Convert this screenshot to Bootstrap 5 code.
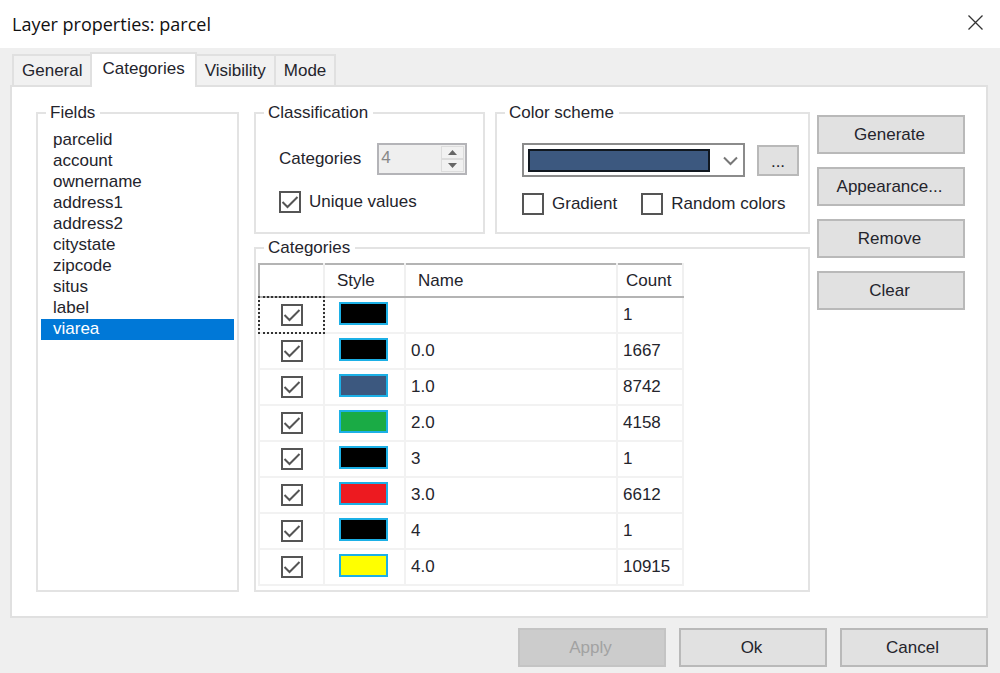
<!DOCTYPE html>
<html lang="en">
<head>
<meta charset="utf-8">
<meta name="viewport" content="width=device-width, initial-scale=1">
<title>Layer properties: parcel</title>
<link href="https://cdn.jsdelivr.net/npm/bootstrap@5.3.0/dist/css/bootstrap.min.css" rel="stylesheet">
<style>
  body { background: #efefef; color: #24242c; font-family: "Liberation Sans", Arial, sans-serif; font-size: 17px; line-height: 20px; }
  .title-bar { height: 48px; padding: 0 16px 0 12px; background: #fff; }
  .title-bar h1 { font: 18px/24px "Open Sans", sans-serif; color: #111; }
  .close-btn { line-height: 0; }

  .nav-tabs { padding: 4px 0 0 12px; border: 0; }
  .nav-tabs .nav-link { height: 31px; padding: 0 8px; margin: 0 -2px 0 0; border: 2px solid #e0e0e0; border-bottom: 0; border-radius: 0; color: inherit; background: #f1f1f1; }
  .nav-tabs .nav-link.active { height: 35px; padding: 0 10px 4px; margin-bottom: -2px; color: inherit; background: #fff; border-color: #e0e0e0; position: relative; z-index: 1; }
  .tab-panel { margin: 0 12px 0 10px; padding: 16px 21px 24px 24px; background: #fff; border: 2px solid #e0e0e0; }

  .group-box { border: 2px solid #e3e3e3; padding: 0 3px; }
  .group-box > legend { float: none; width: auto; margin: 0 0 0 5px; padding: 0 5px 0 4px; font-size: 17px; line-height: 20px; }
  .middle { gap: 4px; margin: 0 7px 0 15px; }
  .top-row { gap: 10px; }
  .fields-box { flex: 0 0 203px; }
  .class-box { flex: 0 0 231px; height: 131px; }
  .scheme-box { height: 131px; }
  .box-body { padding: 20px 6px 0 20px; }
  .scheme-box .box-body { padding-left: 22px; }

  .field-list { display: block; width: 100%; height: 220px; margin-top: 7px; padding: 0; border: 0; outline: 0; overflow: hidden; background: #fff; color: inherit; font: inherit; }
  .field-list option { height: 21px; min-height: 21px; padding: 0 12px; line-height: 21px; }
  .field-list option:checked { background: linear-gradient(#0078d7, #0078d7); -webkit-text-fill-color: #fff; }

  .tick { appearance: none; flex: none; display: block; width: 22px; height: 22px; margin: 0; border: 2px solid #555; background: #fff; }
  .tick:checked { background: #fff url("data:image/svg+xml,%3Csvg xmlns='http://www.w3.org/2000/svg' viewBox='0 0 18 18'%3E%3Cpath d='M1.5 9l5 5L16.5 4' fill='none' stroke='%23555' stroke-width='2'/%3E%3C/svg%3E"); }

  .spin { width: 90px; height: 32px; }
  .spin input { appearance: textfield; width: 100%; height: 100%; padding: 0 26px 3px 2px; border: 2px solid #b4b4b8; background: #efefef; color: #888; }
  .spin .arrows { top: 3px; right: 3px; width: 23px; bottom: 3px; }
  .spin button { flex: 1; padding: 0; line-height: 0; border: 1px solid #dcdcdc; background: #f1f1f1; }

  .combo { flex: 1; height: 34px; }
  .combo select { appearance: none; width: 100%; height: 100%; border: 2px solid #8b8b8b; background: #fff; }
  .combo .ramp { left: 6px; right: 35px; top: 6px; bottom: 5px; border: 2px solid #111820; background: #3c587f; pointer-events: none; }
  .combo svg { right: 7px; top: 13px; pointer-events: none; }

  .push { width: 148px; height: 39px; padding: 0 3px 0 0; border: 2px solid #b9b9b9; border-radius: 0; background: #e1e1e1; color: inherit; font-size: 17px; line-height: 20px; }
  .push:disabled { border-color: #c4c4c4; background: #cccccc; color: #a2a2a2; opacity: 1; }
  .push.more { width: 42px; height: 31px; margin-left: 12px; padding: 3px 0 0; }
  .side-actions { gap: 13px; padding-top: 12px; }

  .cat-table { width: 425px; table-layout: fixed; border-collapse: collapse; margin: 5px 0 0 -1px; }
  .cat-table th { height: 33px; padding: 0 12px; font-weight: 400; border: 2px solid #f0f0f0; border-top-color: #b4b4b4; border-bottom-color: #b4b4b4; }
  .cat-table th:first-child { border-left-color: #b4b4b4; }
  .cat-table td { height: 36px; padding: 0 5px; border: 2px solid #f2f2f2; }
  .cat-table td .tick { margin: 0 auto; }
  .cat-table .focused { outline: 2px dotted #333; outline-offset: -1px; }
  .swatch { width: 49px; height: 23px; margin: 0 0 3px 9px; border: 2px solid #1cb0e6; background: #000; }
  .swatch.blue { background: #3c587f; }
  .swatch.green { background: #1aab45; }
  .swatch.red { background: #ed1a20; }
  .swatch.yellow { background: #ff0; }

  .dialog-foot { padding: 10px 12px 6px; gap: 13px; }
</style>
</head>
<body>
<div class="d-flex flex-column min-vh-100">
  <header class="title-bar d-flex align-items-center justify-content-between">
    <h1 class="m-0">Layer properties: parcel</h1>
    <button type="button" class="close-btn border-0 bg-transparent p-0 pb-1" aria-label="Close">
      <svg width="17" height="17" viewBox="0 0 17 17" fill="none" stroke="#333" stroke-width="1.3"><path d="M1.5 1.5l14 14M15.5 1.5l-14 14"/></svg>
    </button>
  </header>

  <div class="nav nav-tabs align-items-end" role="tablist">
    <button type="button" class="nav-link" role="tab">General</button>
    <button type="button" class="nav-link active" role="tab" aria-selected="true">Categories</button>
    <button type="button" class="nav-link" role="tab">Visibility</button>
    <button type="button" class="nav-link" role="tab">Mode</button>
  </div>

  <main class="tab-panel d-flex flex-grow-1">
    <fieldset class="group-box fields-box">
      <legend>Fields</legend>
      <select class="field-list" size="10" aria-label="Fields">
        <option>parcelid</option>
        <option>account</option>
        <option>ownername</option>
        <option>address1</option>
        <option>address2</option>
        <option>citystate</option>
        <option>zipcode</option>
        <option>situs</option>
        <option>label</option>
        <option selected>viarea</option>
      </select>
    </fieldset>

    <div class="middle d-flex flex-column flex-grow-1">
      <div class="top-row d-flex">
        <fieldset class="group-box class-box">
          <legend>Classification</legend>
          <div class="box-body">
            <div class="d-flex align-items-center gap-3">
              <label for="catCount">Categories</label>
              <div class="spin position-relative">
                <input id="catCount" type="number" value="4" disabled>
                <div class="arrows position-absolute d-flex flex-column">
                  <button type="button" disabled aria-label="Increase"><svg width="9" height="5" viewBox="0 0 9 5"><path d="M0 5L4.500 0L9 5z" fill="#666"/></svg></button>
                  <button type="button" disabled aria-label="Decrease"><svg width="9" height="5" viewBox="0 0 9 5"><path d="M0 0L4.500 5L9 0z" fill="#666"/></svg></button>
                </div>
              </div>
            </div>
            <div class="d-flex align-items-center mt-3">
              <input class="tick" type="checkbox" id="unique" checked>
              <label class="ps-2" for="unique">Unique values</label>
            </div>
          </div>
        </fieldset>

        <fieldset class="group-box scheme-box flex-grow-1">
          <legend>Color scheme</legend>
          <div class="box-body">
            <div class="d-flex align-items-center">
              <div class="combo position-relative">
                <select aria-label="Color scheme"><option aria-label="Blue"></option></select>
                <span class="ramp position-absolute"></span>
                <svg class="position-absolute" width="15" height="10" viewBox="0 0 15 10" fill="none" stroke="#777" stroke-width="2"><path d="M1 1.500l6.500 6.500L14 1.500"/></svg>
              </div>
              <button type="button" class="btn push more">...</button>
            </div>
            <div class="d-flex align-items-center mt-3">
              <input class="tick" type="checkbox" id="gradient">
              <label class="ps-2" for="gradient">Gradient</label>
              <input class="tick ms-4" type="checkbox" id="random">
              <label class="ps-2 text-nowrap" for="random">Random colors</label>
            </div>
          </div>
        </fieldset>
      </div>

      <fieldset class="group-box flex-grow-1">
        <legend>Categories</legend>
        <table class="cat-table">
          <colgroup><col style="width:65px"><col style="width:81px"><col style="width:212px"><col style="width:66px"></colgroup>
          <thead>
            <tr><th scope="col" aria-label="Visible"></th><th scope="col">Style</th><th scope="col">Name</th><th scope="col" class="px-2">Count</th></tr>
          </thead>
          <tbody>
            <tr><td class="focused"><input class="tick" type="checkbox" checked aria-label="Show unnamed"></td><td><div class="swatch"></div></td><td></td><td>1</td></tr>
            <tr><td><input class="tick" type="checkbox" checked aria-label="Show 0.0"></td><td><div class="swatch"></div></td><td>0.0</td><td>1667</td></tr>
            <tr><td><input class="tick" type="checkbox" checked aria-label="Show 1.0"></td><td><div class="swatch blue"></div></td><td>1.0</td><td>8742</td></tr>
            <tr><td><input class="tick" type="checkbox" checked aria-label="Show 2.0"></td><td><div class="swatch green"></div></td><td>2.0</td><td>4158</td></tr>
            <tr><td><input class="tick" type="checkbox" checked aria-label="Show 3"></td><td><div class="swatch"></div></td><td>3</td><td>1</td></tr>
            <tr><td><input class="tick" type="checkbox" checked aria-label="Show 3.0"></td><td><div class="swatch red"></div></td><td>3.0</td><td>6612</td></tr>
            <tr><td><input class="tick" type="checkbox" checked aria-label="Show 4"></td><td><div class="swatch"></div></td><td>4</td><td>1</td></tr>
            <tr><td><input class="tick" type="checkbox" checked aria-label="Show 4.0"></td><td><div class="swatch yellow"></div></td><td>4.0</td><td>10915</td></tr>
          </tbody>
        </table>
      </fieldset>
    </div>

    <div class="side-actions d-flex flex-column">
      <button type="button" class="btn push">Generate</button>
      <button type="button" class="btn push">Appearance...</button>
      <button type="button" class="btn push">Remove</button>
      <button type="button" class="btn push">Clear</button>
    </div>
  </main>

  <footer class="dialog-foot d-flex justify-content-end">
    <button type="button" class="btn push" disabled>Apply</button>
    <button type="button" class="btn push">Ok</button>
    <button type="button" class="btn push">Cancel</button>
  </footer>
</div>
<script src="https://cdn.jsdelivr.net/npm/bootstrap@5.3.0/dist/js/bootstrap.bundle.min.js"></script>
</body>
</html>
